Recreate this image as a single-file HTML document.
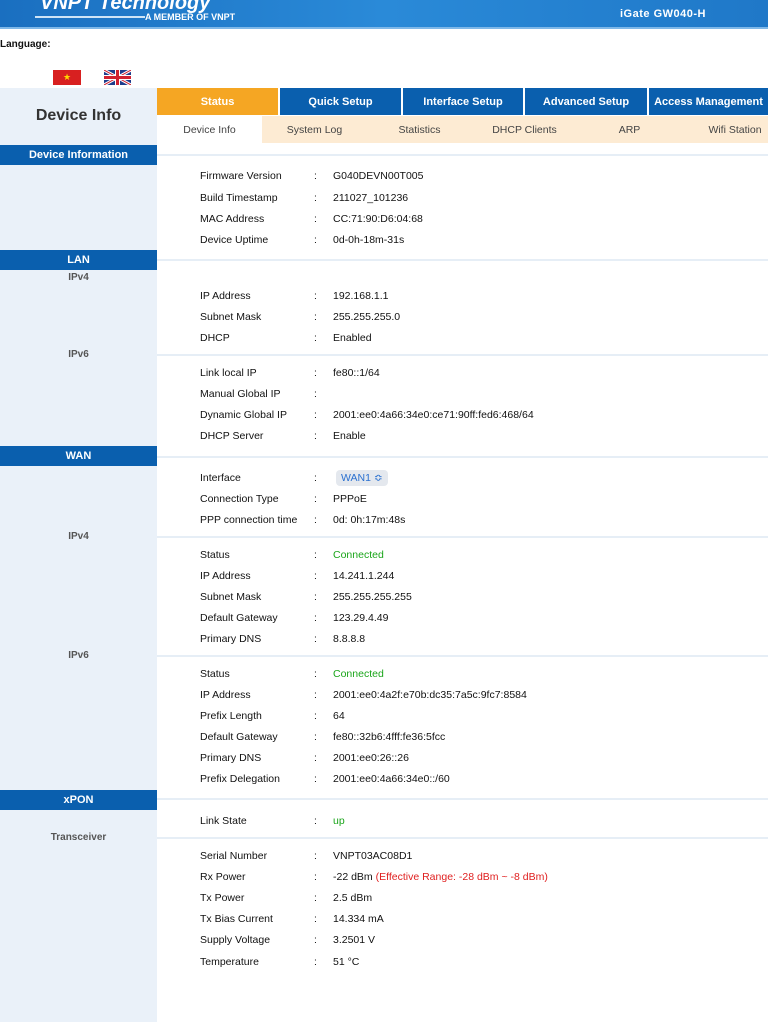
<!DOCTYPE html>
<html><head><meta charset="utf-8"><style>
*{margin:0;padding:0;box-sizing:border-box}
body{width:768px;height:1024px;position:relative;background:#fff;font-family:"Liberation Sans",sans-serif;overflow:hidden}
.a{position:absolute}
.hdr{left:0;top:0;width:768px;height:29px;background:linear-gradient(90deg,#1a6fc0,#2a8ad8 50%,#1f78c8);border-bottom:2px solid #7fb8e8}
.side{left:0;top:88px;width:157px;height:934px;background:#eaf1f9}
.sh{left:0;width:157px;height:20px;background:#0a5fae;color:#fff;font-weight:bold;font-size:11px;text-align:center;line-height:21px}
.sl{left:0;width:157px;text-align:center;font-size:10px;color:#555;font-weight:bold}
.tab{top:88px;height:27px;background:#0a5fae;color:#fff;font-weight:bold;font-size:11px;text-align:center;line-height:28px}
.st{top:116px;height:27px;font-size:10.5px;color:#444;line-height:29px;text-align:center}
.ln{left:157px;width:611px;height:2px;background:#e6eef6}
.r{left:200px;font-size:10.5px;color:#111;height:14px;line-height:14px;width:560px}
.r span{position:absolute}
.r .c{left:114px}.r .v{left:133px;white-space:nowrap}
.g{color:#1aa51a}.red{color:#e02020}
</style></head><body>
<div class="a hdr"></div>
<div class="a" style="left:40px;top:-8px;color:#fff;font-weight:bold;font-size:20px;font-style:italic">VNPT Technology</div>
<div class="a" style="left:35px;top:16px;width:110px;height:2px;background:#cfe4f6"></div>
<div class="a" style="left:145px;top:12px;color:#fff;font-weight:bold;font-size:9px">A MEMBER OF VNPT</div>
<div class="a" style="left:620px;top:8px;color:#fff;font-weight:bold;font-size:11px;letter-spacing:0.5px">iGate GW040-H</div>
<div class="a" style="left:0;top:39px;font-size:10px;font-weight:bold;color:#111">Language:</div>
<div class="a" style="left:53px;top:70px;width:28px;height:15px;background:#d82020;color:#ffd800;font-size:9px;text-align:center;line-height:15px">★</div>
<svg class="a" style="left:104px;top:70px" width="27" height="15" viewBox="0 0 27 15"><rect width="27" height="15" fill="#1e3c8c"/><path d="M0 0L27 15M27 0L0 15" stroke="#fff" stroke-width="3"/><path d="M0 0L27 15M27 0L0 15" stroke="#d02030" stroke-width="1"/><path d="M13.5 0V15M0 7.5H27" stroke="#fff" stroke-width="5"/><path d="M13.5 0V15M0 7.5H27" stroke="#d02030" stroke-width="3"/></svg>
<div class="a side"></div>
<div class="a" style="left:0;top:107px;width:157px;text-align:center;font-size:16px;font-weight:bold;color:#333">Device Info</div>
<div class="a sh" style="top:145px">Device Information</div>
<div class="a sh" style="top:250px">LAN</div>
<div class="a sl" style="top:272px">IPv4</div>
<div class="a sl" style="top:349px">IPv6</div>
<div class="a sh" style="top:446px">WAN</div>
<div class="a sl" style="top:531px">IPv4</div>
<div class="a sl" style="top:650px">IPv6</div>
<div class="a sh" style="top:790px">xPON</div>
<div class="a sl" style="top:832px">Transceiver</div>
<div class="a tab" style="left:157px;width:121px;background:#f5a623">Status</div>
<div class="a tab" style="left:280px;width:121px">Quick Setup</div>
<div class="a tab" style="left:403px;width:120px">Interface Setup</div>
<div class="a tab" style="left:525px;width:122px">Advanced Setup</div>
<div class="a tab" style="left:649px;width:119px">Access Management</div>
<div class="a" style="left:262px;top:116px;width:506px;height:27px;background:#fdebd3"></div>
<div class="a st" style="left:157px;width:105px">Device Info</div>
<div class="a st" style="left:262px;width:105px">System Log</div>
<div class="a st" style="left:367px;width:105px">Statistics</div>
<div class="a st" style="left:472px;width:105px">DHCP Clients</div>
<div class="a st" style="left:577px;width:105px">ARP</div>
<div class="a st" style="left:682px;width:106px">Wifi Station</div>
<div class="a ln" style="top:154px"></div>
<div class="a ln" style="top:259px"></div>
<div class="a ln" style="top:354px"></div>
<div class="a ln" style="top:456px"></div>
<div class="a ln" style="top:536px"></div>
<div class="a ln" style="top:655px"></div>
<div class="a ln" style="top:798px"></div>
<div class="a ln" style="top:837px"></div>
<div class="a r" style="top:169px"><span>Firmware Version</span><span class="c">:</span><span class="v">G040DEVN00T005</span></div>
<div class="a r" style="top:191px"><span>Build Timestamp</span><span class="c">:</span><span class="v">211027_101236</span></div>
<div class="a r" style="top:212px"><span>MAC Address</span><span class="c">:</span><span class="v">CC:71:90:D6:04:68</span></div>
<div class="a r" style="top:233px"><span>Device Uptime</span><span class="c">:</span><span class="v">0d-0h-18m-31s</span></div>
<div class="a r" style="top:289px"><span>IP Address</span><span class="c">:</span><span class="v">192.168.1.1</span></div>
<div class="a r" style="top:310px"><span>Subnet Mask</span><span class="c">:</span><span class="v">255.255.255.0</span></div>
<div class="a r" style="top:331px"><span>DHCP</span><span class="c">:</span><span class="v">Enabled</span></div>
<div class="a r" style="top:366px"><span>Link local IP</span><span class="c">:</span><span class="v">fe80::1/64</span></div>
<div class="a r" style="top:387px"><span>Manual Global IP</span><span class="c">:</span></div>
<div class="a r" style="top:408px"><span>Dynamic Global IP</span><span class="c">:</span><span class="v">2001:ee0:4a66:34e0:ce71:90ff:fed6:468/64</span></div>
<div class="a r" style="top:429px"><span>DHCP Server</span><span class="c">:</span><span class="v">Enable</span></div>
<div class="a r" style="top:471px"><span>Interface</span><span class="c">:</span><span class="v" style="left:136px;top:-1px;background:#e4e8ee;border-radius:4px;padding:1px 5px;color:#2a70d0">WAN1 ≎</span></div>
<div class="a r" style="top:492px"><span>Connection Type</span><span class="c">:</span><span class="v">PPPoE</span></div>
<div class="a r" style="top:513px"><span>PPP connection time</span><span class="c">:</span><span class="v">0d: 0h:17m:48s</span></div>
<div class="a r" style="top:548px"><span>Status</span><span class="c">:</span><span class="v g">Connected</span></div>
<div class="a r" style="top:569px"><span>IP Address</span><span class="c">:</span><span class="v">14.241.1.244</span></div>
<div class="a r" style="top:590px"><span>Subnet Mask</span><span class="c">:</span><span class="v">255.255.255.255</span></div>
<div class="a r" style="top:611px"><span>Default Gateway</span><span class="c">:</span><span class="v">123.29.4.49</span></div>
<div class="a r" style="top:632px"><span>Primary DNS</span><span class="c">:</span><span class="v">8.8.8.8</span></div>
<div class="a r" style="top:667px"><span>Status</span><span class="c">:</span><span class="v g">Connected</span></div>
<div class="a r" style="top:688px"><span>IP Address</span><span class="c">:</span><span class="v">2001:ee0:4a2f:e70b:dc35:7a5c:9fc7:8584</span></div>
<div class="a r" style="top:709px"><span>Prefix Length</span><span class="c">:</span><span class="v">64</span></div>
<div class="a r" style="top:730px"><span>Default Gateway</span><span class="c">:</span><span class="v">fe80::32b6:4fff:fe36:5fcc</span></div>
<div class="a r" style="top:751px"><span>Primary DNS</span><span class="c">:</span><span class="v">2001:ee0:26::26</span></div>
<div class="a r" style="top:772px"><span>Prefix Delegation</span><span class="c">:</span><span class="v">2001:ee0:4a66:34e0::/60</span></div>
<div class="a r" style="top:814px"><span>Link State</span><span class="c">:</span><span class="v g">up</span></div>
<div class="a r" style="top:849px"><span>Serial Number</span><span class="c">:</span><span class="v">VNPT03AC08D1</span></div>
<div class="a r" style="top:870px"><span>Rx Power</span><span class="c">:</span><span class="v">-22 dBm <span class="red" style="position:static">(Effective Range: -28 dBm ~ -8 dBm)</span></span></div>
<div class="a r" style="top:891px"><span>Tx Power</span><span class="c">:</span><span class="v">2.5 dBm</span></div>
<div class="a r" style="top:912px"><span>Tx Bias Current</span><span class="c">:</span><span class="v">14.334 mA</span></div>
<div class="a r" style="top:933px"><span>Supply Voltage</span><span class="c">:</span><span class="v">3.2501 V</span></div>
<div class="a r" style="top:955px"><span>Temperature</span><span class="c">:</span><span class="v">51 °C</span></div>
</body></html>
